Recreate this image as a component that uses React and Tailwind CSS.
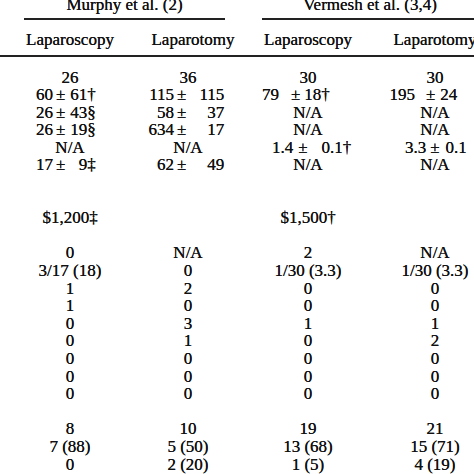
const rows = [
  ['26', '36', '30', '30'],
  null, null, null, null, null,
  ['', '', '', ''],
  ['', '', '', ''],
  ['$1,200‡', '', '$1,500†', ''],
  ['', '', '', ''],
  ['0', 'N/A', '2', 'N/A'],
  ['3/17 (18)', '0', '1/30 (3.3)', '1/30 (3.3)'],
  ['1', '2', '0', '0'],
  ['1', '0', '0', '0'],
  ['0', '3', '1', '1'],
  ['0', '1', '0', '2'],
  ['0', '0', '0', '0'],
  ['0', '0', '0', '0'],
  ['0', '0', '0', '0'],
  ['', '', '', ''],
  ['8', '10', '19', '21'],
  ['7 (88)', '5 (50)', '13 (68)', '15 (71)'],
  ['0', '2 (20)', '1 (5)', '4 (19)'],
];

function Pm({ a, b, s, cls }) {
  return (
    <div className="flex whitespace-nowrap">
      <span className={`text-right ${cls[0]}`}>{a}</span>
      <span className={cls[1]}>±</span>
      <span className={`text-right ${cls[2]}`}>{b}</span>
      <span>{s}</span>
    </div>
  );
}

const C = ({ children }) => <div className="text-center whitespace-nowrap">{children}</div>;

const pmRows = [
  [
    <Pm a="60" b="61" s="†" cls={['ml-[36px] w-[17px] shrink-0', 'ml-[3px] mr-[5px]', 'w-[17px] shrink-0']} />,
    <Pm a="115" b="115" s="" cls={['ml-[8px] w-[26px] shrink-0', 'ml-[3px] mr-[12px]', 'w-[26px] shrink-0']} />,
    <Pm a="79" b="18" s="†" cls={['ml-[26px] w-[17px] shrink-0', 'ml-[12px] mr-[4px]', 'shrink-0']} />,
    <Pm a="195" b="24" s="" cls={['ml-[9px] w-[26px] shrink-0', 'ml-[11px] mr-[5px]', 'shrink-0']} />,
  ],
  [
    <Pm a="26" b="43" s="§" cls={['ml-[36px] w-[17px] shrink-0', 'ml-[3px] mr-[5px]', 'w-[17px] shrink-0']} />,
    <Pm a="58" b="37" s="" cls={['ml-[8px] w-[26px] shrink-0', 'ml-[3px] mr-[12px]', 'w-[26px] shrink-0']} />,
    <C>N/A</C>,
    <C>N/A</C>,
  ],
  [
    <Pm a="26" b="19" s="§" cls={['ml-[36px] w-[17px] shrink-0', 'ml-[3px] mr-[5px]', 'w-[17px] shrink-0']} />,
    <Pm a="634" b="17" s="" cls={['ml-[8px] w-[26px] shrink-0', 'ml-[3px] mr-[12px]', 'w-[26px] shrink-0']} />,
    <C>N/A</C>,
    <C>N/A</C>,
  ],
  [
    <C>N/A</C>,
    <C>N/A</C>,
    <Pm a="1.4" b="0.1" s="†" cls={['ml-[36px] shrink-0', 'ml-[5px] mr-[14px]', 'shrink-0']} />,
    <Pm a="3.3" b="0.1" s="" cls={['ml-[25px] shrink-0', 'ml-[4px] mr-[6px]', 'shrink-0']} />,
  ],
  [
    <Pm a="17" b="9" s="‡" cls={['ml-[36px] w-[17px] shrink-0', 'ml-[3px] mr-[5px]', 'w-[17px] shrink-0']} />,
    <Pm a="62" b="49" s="" cls={['ml-[8px] w-[26px] shrink-0', 'ml-[3px] mr-[12px]', 'w-[26px] shrink-0']} />,
    <C>N/A</C>,
    <C>N/A</C>,
  ],
];

export default function App() {
  let k = 0;
  return (
    <div
      className="w-[474px] h-[474px] overflow-hidden bg-white text-[#111] text-[17px] [text-shadow:0_0_0.5px_#111]"
      style={{ fontFamily: '"Liberation Serif", "Times New Roman", serif' }}
    >
      <div className="w-[490px]">
        {/* study headers */}
        <div className="grid grid-cols-[236px_254px] h-[20px]">
          <div className="ml-[24px] mr-[11px] border-b-2 border-[#222] h-[20px]">
            <div className="-mt-[4px] leading-[18px] text-center">Murphy et al. (2)</div>
          </div>
          <div className="ml-[26px] mr-[12px] border-b-2 border-[#222] h-[20px]">
            <div className="-mt-[4px] leading-[18px] text-center">Vermesh et al. (3,4)</div>
          </div>
        </div>

        {/* approach headers */}
        <div className="grid grid-cols-[140px_96px_144px_110px] h-[37px] border-b-2 border-[#222] pt-[4px] leading-[31px]">
          <div className="text-center">Laparoscopy</div>
          <div className="text-center pl-[10px]">Laparotomy</div>
          <div className="text-center">Laparoscopy</div>
          <div className="text-center">Laparotomy</div>
        </div>

        {/* data */}
        <div className="mt-[11.5px]">
          {rows.map((r, i) => {
            const cells = r || pmRows[k++];
            return (
              <div key={i} className="grid grid-cols-[140px_96px_144px_110px] h-[17.6px] leading-[17.6px]">
                {r ? cells.map((c, j) => <C key={j}>{c}</C>) : cells.map((c, j) => <div key={j}>{c}</div>)}
              </div>
            );
          })}
        </div>
      </div>
    </div>
  );
}
